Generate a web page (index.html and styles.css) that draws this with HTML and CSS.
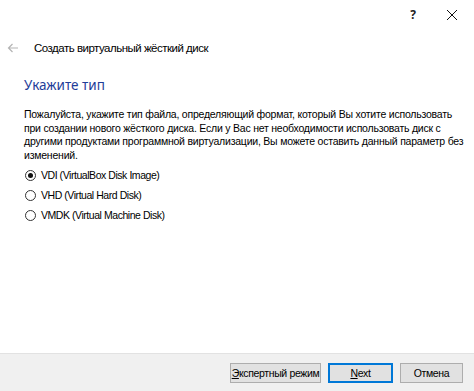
FILE: index.html
```html
<!DOCTYPE html>
<html lang="ru">
<head>
<meta charset="utf-8">
<link rel="stylesheet" href="styles.css">
</head>
<body>
<div class="window">
  <div class="titlebar">
    <span class="help">?</span>
    <svg class="close" width="12" height="12" viewBox="0 0 12 12"><path d="M1 1 L11 11 M11 1 L1 11" stroke="#111" stroke-width="1" fill="none"/></svg>
  </div>
  <div class="header">
    <svg class="back" width="12" height="10" viewBox="0 0 12 10"><path d="M11 5 H1.5 M5.5 1 L1.5 5 L5.5 9" stroke="#b4b4b4" stroke-width="1.2" fill="none"/></svg>
    <span class="title">Создать виртуальный жёсткий диск</span>
  </div>
  <div class="content">
    <h1 class="heading">Укажите тип</h1>
    <p class="desc">Пожалуйста, укажите тип файла, определяющий формат, который Вы хотите использовать<br>при создании нового жёсткого диска. Если у Вас нет необходимости использовать диск с другими продуктами программной виртуализации, Вы можете оставить данный параметр без изменений.</p>
    <div class="options">
      <label class="option"><span class="radio checked"></span>VDI (VirtualBox Disk Image)</label>
      <label class="option"><span class="radio"></span>VHD (Virtual Hard Disk)</label>
      <label class="option"><span class="radio"></span>VMDK (Virtual Machine Disk)</label>
    </div>
  </div>
  <div class="footer">
    <button class="btn btn-expert"><u>Э</u>кспертный режим</button>
    <button class="btn btn-default"><u>N</u>ext</button>
    <button class="btn btn-cancel">Отмена</button>
  </div>
</div>
</body>
</html>
```
FILE: styles.css
```css
html, body {
  margin: 0;
  padding: 0;
  background: #ffffff;
}
.window {
  width: 474px;
  height: 391px;
  display: flex;
  flex-direction: column;
  font-family: "Liberation Sans", Arial, sans-serif;
  color: #000;
}
.titlebar {
  height: 29px;
  display: flex;
  align-items: center;
  justify-content: flex-end;
  gap: 30px;
  padding-right: 16px;
}
.help {
  font-family: "Noto Sans", sans-serif;
  font-size: 12px;
  font-weight: bold;
  color: #222;
}
.close {
  display: block;
}
.header {
  height: 38px;
  display: flex;
  align-items: center;
  padding-left: 7px;
}
.back {
  display: block;
  margin-right: 15px;
}
.title {
  font-family: "Liberation Sans", Arial, sans-serif;
  font-size: 11.5px;
  letter-spacing: -0.5px;
  color: #000;
}
.content {
  flex: 1;
  padding: 0 2px 0 24px;
}
.heading {
  margin: 8px 0 0 0;
  font-family: "Noto Sans", sans-serif;
  font-weight: normal;
  font-size: 13.5px;
  line-height: 20px;
  color: #1f3d99;
}
.desc {
  margin: 13px 0 0 0;
  font-size: 10.5px;
  letter-spacing: -0.22px;
  line-height: 13.5px;
}
.options {
  margin-top: 3px;
  display: flex;
  flex-direction: column;
}
.option {
  height: 20px;
  display: flex;
  align-items: center;
  font-size: 10.5px;
  letter-spacing: -0.45px;
}
.radio {
  width: 11px;
  height: 11px;
  box-sizing: border-box;
  border: 1px solid #333;
  border-radius: 50%;
  margin: 0 5px 0 1px;
  display: flex;
  align-items: center;
  justify-content: center;
  background: #fff;
}
.radio.checked::after {
  content: "";
  width: 5px;
  height: 5px;
  border-radius: 50%;
  background: #111;
}
.footer {
  height: 37px;
  background: #f0f0f0;
  border-top: 1px solid #e2e2e2;
  display: flex;
  align-items: center;
  justify-content: flex-end;
  gap: 7px;
  padding-right: 11px;
}
.btn {
  height: 20px;
  padding: 0;
  margin: 0;
  border: 1px solid #adadad;
  background: #e1e1e1;
  font-family: "Liberation Sans", Arial, sans-serif;
  font-size: 10.5px;
  letter-spacing: -0.35px;
  white-space: nowrap;
  color: #000;
}
.btn u {
  text-decoration: underline;
}
.btn-expert {
  width: 91px;
}
.btn-default {
  width: 65px;
  border: 2px solid #0078d7;
}
.btn-cancel {
  width: 63px;
}
```
